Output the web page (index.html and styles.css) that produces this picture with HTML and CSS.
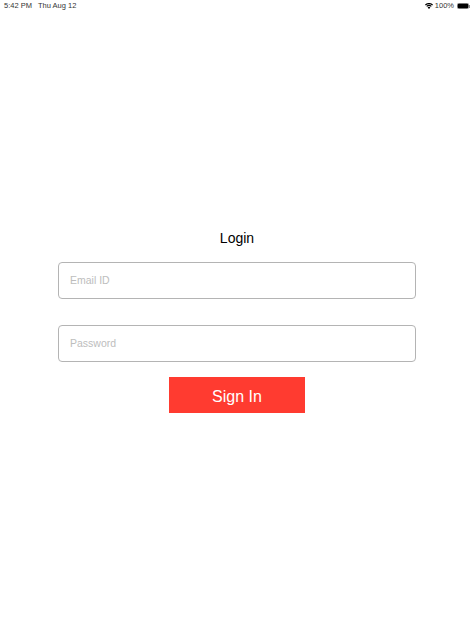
FILE: index.html
```html
<!DOCTYPE html>
<html lang="en">
<head>
    <meta charset="UTF-8">
    <meta name="viewport" content="width=device-width, initial-scale=1.0">
    <title>Login</title>
    <link rel="stylesheet" href="styles.css">
</head>
<body>

<div class="status-bar">
    <div class="status-left">
        <span>5:42 PM</span>
        <span>Thu Aug 12</span>
    </div>
    <div class="status-right">
        <svg class="wifi" viewBox="0 0 12 9" width="8" height="6">
            <path d="M6 9 3.9 6.6a3 3 0 0 1 4.2 0z" fill="#000"/>
            <path d="M3.1 5.8 1.9 4.5a5.8 5.8 0 0 1 8.2 0L8.9 5.8a4.1 4.1 0 0 0-5.8 0z" fill="#000"/>
            <path d="M1.2 3.7 0 2.4a8.5 8.5 0 0 1 12 0l-1.2 1.3a6.8 6.8 0 0 0-9.6 0z" fill="#000"/>
        </svg>
        <span>100%</span>
        <div class="battery"><div class="battery-level"></div></div>
    </div>
</div>

<form class="login-form">
    <h1>Login</h1>
    <input type="text" class="field" placeholder="Email ID">
    <input type="password" class="field" placeholder="Password">
    <button type="button" class="sign-in">Sign In</button>
</form>

</body>
</html>
```
FILE: styles.css
```css
html, body {
    height: 100%;
}
body {
    margin: 0;
    background-color: #fff;
    font-family: "Liberation Sans", Arial, sans-serif;
    color: #000;
}
.status-bar {
    display: flex;
    justify-content: space-between;
    align-items: center;
    height: 11px;
    padding: 0 5px 0 4px;
    font-size: 7.5px;
    color: #333;
}
.status-left {
    display: flex;
    gap: 6px;
}
.status-right {
    display: flex;
    align-items: center;
    gap: 2px;
}
.battery {
    position: relative;
    width: 12px;
    height: 6px;
    margin-left: 1px;
    box-sizing: border-box;
    border: 0.5px solid #777;
    border-radius: 1.5px;
}
.battery::after {
    content: "";
    position: absolute;
    right: -2px;
    top: 1px;
    width: 1px;
    height: 3px;
    background-color: #888;
}
.battery-level {
    height: 100%;
    background-color: #000;
}
.login-form {
    display: flex;
    flex-direction: column;
    align-items: center;
    padding: 219px 58px 0;
}
.login-form h1 {
    margin: 0 0 15px;
    font-size: 14px;
    line-height: 17px;
    font-weight: normal;
}
.field {
    width: 100%;
    height: 37px;
    margin-bottom: 26px;
    padding: 0 11px 1px;
    box-sizing: border-box;
    border: 1px solid #b4b4b4;
    border-radius: 4px;
    background-color: #fff;
    font-family: inherit;
    font-size: 10.5px;
    outline: none;
}
.field::placeholder {
    color: #bdbdbd;
    opacity: 1;
}
.field:last-of-type {
    margin-bottom: 15px;
}
.sign-in {
    width: 136px;
    height: 36px;
    padding: 4px 0 0;
    border: none;
    background-color: #ff3b30;
    color: #fff;
    font-family: inherit;
    font-size: 16px;
}
```
